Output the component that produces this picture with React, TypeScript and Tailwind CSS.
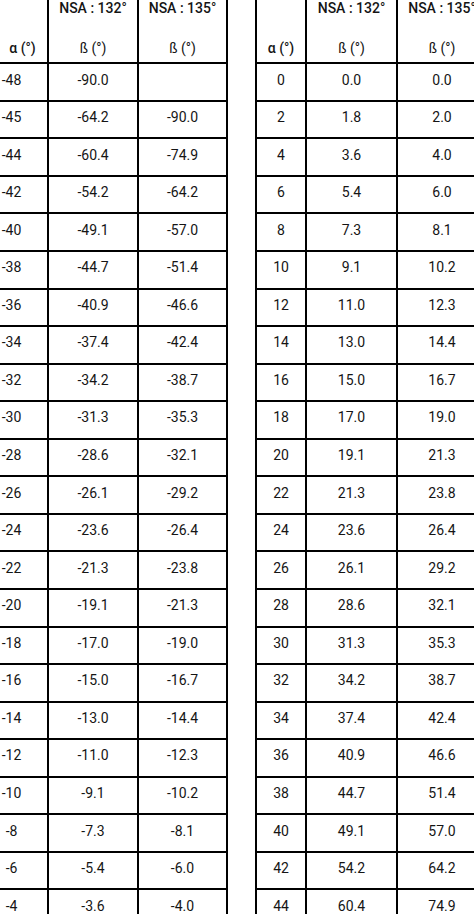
import React from 'react';

const leftRows: [string, string, string][] = [
  ['-48', '-90.0', ''],
  ['-45', '-64.2', '-90.0'],
  ['-44', '-60.4', '-74.9'],
  ['-42', '-54.2', '-64.2'],
  ['-40', '-49.1', '-57.0'],
  ['-38', '-44.7', '-51.4'],
  ['-36', '-40.9', '-46.6'],
  ['-34', '-37.4', '-42.4'],
  ['-32', '-34.2', '-38.7'],
  ['-30', '-31.3', '-35.3'],
  ['-28', '-28.6', '-32.1'],
  ['-26', '-26.1', '-29.2'],
  ['-24', '-23.6', '-26.4'],
  ['-22', '-21.3', '-23.8'],
  ['-20', '-19.1', '-21.3'],
  ['-18', '-17.0', '-19.0'],
  ['-16', '-15.0', '-16.7'],
  ['-14', '-13.0', '-14.4'],
  ['-12', '-11.0', '-12.3'],
  ['-10', '-9.1', '-10.2'],
  ['-8', '-7.3', '-8.1'],
  ['-6', '-5.4', '-6.0'],
  ['-4', '-3.6', '-4.0'],
];

const rightRows: [string, string, string][] = [
  ['0', '0.0', '0.0'],
  ['2', '1.8', '2.0'],
  ['4', '3.6', '4.0'],
  ['6', '5.4', '6.0'],
  ['8', '7.3', '8.1'],
  ['10', '9.1', '10.2'],
  ['12', '11.0', '12.3'],
  ['14', '13.0', '14.4'],
  ['16', '15.0', '16.7'],
  ['18', '17.0', '19.0'],
  ['20', '19.1', '21.3'],
  ['22', '21.3', '23.8'],
  ['24', '23.6', '26.4'],
  ['26', '26.1', '29.2'],
  ['28', '28.6', '32.1'],
  ['30', '31.3', '35.3'],
  ['32', '34.2', '38.7'],
  ['34', '37.4', '42.4'],
  ['36', '40.9', '46.6'],
  ['38', '44.7', '51.4'],
  ['40', '49.1', '57.0'],
  ['42', '54.2', '64.2'],
  ['44', '60.4', '74.9'],
];

// header cell: NSA line on top, unit line at the bottom
const HeadCell = ({ top, bottom, alpha }: { top?: string; bottom: string; alpha?: boolean }) => (
  <div className="h-[64.3px] border-r-2 border-b-2 border-black flex flex-col items-center whitespace-nowrap">
    <span className="leading-[17px] font-medium h-[17px]">{top ?? ''}</span>
    <span className={`leading-[17px] mt-[23px] ${alpha ? 'font-medium' : ''}`}>{bottom}</span>
  </div>
);

const Cell = ({ children, className = '' }: { children: React.ReactNode; className?: string }) => (
  <div className={`h-[37.55px] border-r-2 border-b-2 border-black flex items-center justify-center pb-[4px] leading-[17px] whitespace-nowrap ${className}`}>
    {children}
  </div>
);

const Table = ({ rows, cols, firstPad, className = '' }: { rows: [string, string, string][]; cols: string; firstPad?: string; className?: string }) => (
  <div className={`grid shrink-0 content-start ${cols} ${className}`}>
    <HeadCell bottom="α (°)" alpha />
    <HeadCell top="NSA : 132°" bottom="ß (°)" />
    <HeadCell top="NSA : 135°" bottom="ß (°)" />
    {rows.map(([a, b, c]) => (
      <React.Fragment key={a}>
        <Cell className={firstPad}>{a}</Cell>
        <Cell>{b}</Cell>
        <Cell>{c}</Cell>
      </React.Fragment>
    ))}
  </div>
);

export default function App() {
  return (
    <div
      className="w-[474px] h-[914px] overflow-hidden bg-white text-[14px] text-[#151515] flex items-start"
      style={{ fontFamily: 'Roboto, "Liberation Sans", sans-serif' }}
    >
      <Table rows={leftRows} cols="grid-cols-[51px_90px_89px]" firstPad="pr-[22px]" className="ml-[-2px]" />
      <Table rows={rightRows} cols="grid-cols-[50px_91px_90px]" className="ml-[27px] border-l-2 border-black" />
    </div>
  );
}
